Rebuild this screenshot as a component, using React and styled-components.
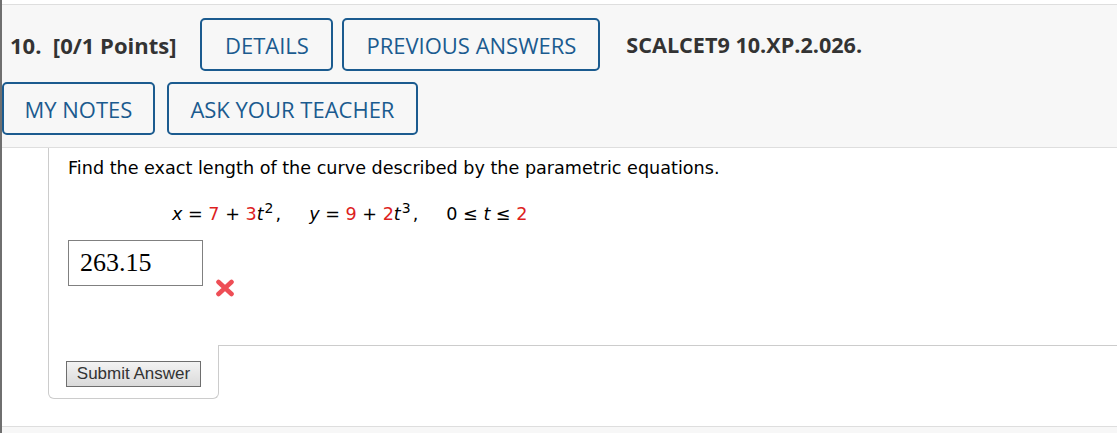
import React from 'react';
import styled, { createGlobalStyle } from 'styled-components';

const GlobalStyle = createGlobalStyle`
  html, body {
    margin: 0;
    padding: 0;
    background: #fff;
  }
  body {
    font-family: "Open Sans", "Liberation Sans", sans-serif;
  }
`;

// === Page frame ===
const Page = styled.div`
  border-left: 2px solid #6f6f6f;
  min-height: 433px;
  padding-top: 4px;
  box-sizing: border-box;
`;

// === Question header ===
const Header = styled.div`
  background: #f7f7f7;
  border-top: 1px solid #dedede;
  border-bottom: 1px solid #dedede;
  padding: 13px 0 12px;
  display: flex;
  flex-direction: column;
  gap: 11px;
`;

const HeaderRow = styled.div`
  display: flex;
  align-items: center;
  padding-left: ${({ indent }) => indent || 0}px;
`;

const Label = styled.span`
  font-size: ${({ small }) => (small ? 21.6 : 22)}px;
  font-weight: 700;
  color: #333;
  margin-right: ${({ gap }) => gap || 0}px;
  white-space: pre;
`;

const OutlineButton = styled.button`
  height: 53px;
  box-sizing: border-box;
  padding: 0 ${({ pad }) => pad || 22}px;
  border: 2px solid #1b5b8f;
  border-radius: 5px;
  background: transparent;
  color: #1b5b8f;
  font-family: "Open Sans", "Liberation Sans", sans-serif;
  font-size: 22px;
  font-weight: 400;
  text-transform: uppercase;
  cursor: pointer;
  margin-right: ${({ gap }) => gap || 0}px;
`;

// === Question body ===
const Body = styled.div`
  margin-left: 46px;
  font-family: "DejaVu Sans", Verdana, sans-serif;
  color: #000;
`;

const Prompt = styled.div`
  border-left: 1px solid #cccccc;
  border-bottom: 1px solid #cccccc;
  padding: 9px 0 0 19px;
  height: 198px;
  box-sizing: border-box;
`;

const Text = styled.p`
  margin: 0;
  font-size: 17.6px;
  line-height: 22px;
`;

const Equation = styled.p`
  margin: 24px 0 0 104px;
  font-size: 17.6px;
  line-height: 22px;
  white-space: nowrap;
`;

const V = styled.i`
  font-style: italic;
`;

const Num = styled.span`
  color: #dd1f1f;
`;

const Sup = styled.sup`
  font-size: 14px;
  line-height: 0;
  margin: 0 2px 0 1px;
`;

const Sep = styled.span`
  display: inline-block;
  width: 28px;
`;

const AnswerRow = styled.div`
  display: flex;
  align-items: flex-start;
  margin-top: 15px;
`;

const AnswerBox = styled.div`
  width: 135px;
  height: 46px;
  box-sizing: border-box;
  border: 1px solid #808080;
  padding: 6px 0 0 11px;
  font-family: "Liberation Serif", "Times New Roman", serif;
  font-size: 26px;
  line-height: 32px;
  color: #000;
`;

const Mark = styled.svg`
  margin: 39px 0 0 12px;
  flex: none;
`;

const SubmitBar = styled.div`
  position: relative;
  margin-top: -1px;
  width: 171px;
  height: 54px;
  box-sizing: border-box;
  background: #fff;
  border: 1px solid #cccccc;
  border-top: none;
  border-radius: 0 0 6px 6px;
  padding: 16px 0 0 17px;
`;

const SubmitButton = styled.button`
  height: 26px;
  width: 135px;
  box-sizing: border-box;
  padding: 0;
  border: 1px solid #6e6e6e;
  background: linear-gradient(#f3f3f3, #dadada);
  color: #333;
  font-family: "Liberation Sans", Arial, sans-serif;
  font-size: 17px;
  cursor: pointer;
`;

const Footer = styled.div`
  margin-top: 27px;
  border-top: 1px solid #dedede;
  background: #f7f7f7;
  height: 8px;
`;

const WrongIcon = () => (
  <Mark width="20" height="18" viewBox="0 0 20 18">
    <path
      d="M3.5 3 L16.5 15 M16.5 3 L3.5 15"
      stroke="#ee4e56"
      strokeWidth="4.6"
      strokeLinecap="round"
      fill="none"
    />
  </Mark>
);

const App = () => (
  <>
    <GlobalStyle />
    <Page>
      <Header>
        <HeaderRow indent={8}>
          <Label gap={24}>10.  [0/1 Points]</Label>
          <OutlineButton gap={9} pad={22.5}>Details</OutlineButton>
          <OutlineButton gap={26}>Previous Answers</OutlineButton>
          <Label small>SCALCET9 10.XP.2.026.</Label>
        </HeaderRow>
        <HeaderRow>
          <OutlineButton gap={12} pad={20.5}>My Notes</OutlineButton>
          <OutlineButton pad={21.5}>Ask Your Teacher</OutlineButton>
        </HeaderRow>
      </Header>

      <Body>
        <Prompt>
          <Text>Find the exact length of the curve described by the parametric equations.</Text>
          <Equation>
            <V>x</V> = <Num>7</Num> + <Num>3</Num><V>t</V><Sup>2</Sup>,
            <Sep />
            <V>y</V> = <Num>9</Num> + <Num>2</Num><V>t</V><Sup>3</Sup>,
            <Sep />
            0 ≤ <V>t</V> ≤ <Num>2</Num>
          </Equation>
          <AnswerRow>
            <AnswerBox>263.15</AnswerBox>
            <WrongIcon />
          </AnswerRow>
        </Prompt>
        <SubmitBar>
          <SubmitButton>Submit Answer</SubmitButton>
        </SubmitBar>
      </Body>
      <Footer />
    </Page>
  </>
);

export default App;
